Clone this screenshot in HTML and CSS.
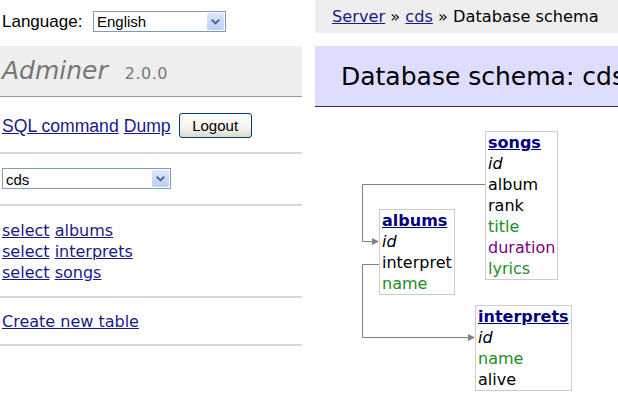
FILE: index.html
```html
<!DOCTYPE html>
<html lang="en">
<head>
  <meta charset="UTF-8">
  <title>Database schema: cds - Adminer</title>
  <link rel="stylesheet" href="styles.css">
</head>
<body>
  <div class="page">
    <div id="menu">
      <form class="lang">
        <label>Language:</label>
        <span class="select lang-select">
          <select><option>English</option></select>
          <svg class="arrow" width="18" height="17" viewBox="0 0 18 17"><path d="M5 6.5 L9 10.5 L13 6.5" fill="none" stroke="#4d6185" stroke-width="2"/></svg>
        </span>
      </form>

      <h1>Adminer <span class="version">2.0.0</span></h1>

      <div class="block links">
        <a href="#">SQL command</a> <a href="#">Dump</a>
        <button class="logout">Logout</button>
      </div>

      <div class="block db">
        <span class="select db-select">
          <select><option>cds</option></select>
          <svg class="arrow" width="18" height="17" viewBox="0 0 18 17"><path d="M5 6.5 L9 10.5 L13 6.5" fill="none" stroke="#4d6185" stroke-width="2"/></svg>
        </span>
      </div>

      <div class="block tables">
        <a href="#">select</a> <a href="#">albums</a><br>
        <a href="#">select</a> <a href="#">interprets</a><br>
        <a href="#">select</a> <a href="#">songs</a>
      </div>

      <div class="block create">
        <a href="#">Create new table</a>
      </div>
    </div>

    <div id="content">
      <p class="breadcrumb"><a href="#">Server</a> &raquo; <a href="#">cds</a> &raquo; Database schema</p>
      <h2>Database schema: cds</h2>

      <div class="schema">
        <svg class="refs" width="300" height="290">
          <path d="M170 77.5 H47.5 V134.5 H58" fill="none" stroke="#808080"/>
          <polygon points="57,131 64,134.5 57,138" fill="#808080"/>
          <path d="M64 157.5 H47.5 V230.5 H154" fill="none" stroke="#808080"/>
          <polygon points="153,227 160,230.5 153,234" fill="#808080"/>
        </svg>

        <div class="table" style="left: 170px; top: 24px;">
          <a href="#" class="name">songs</a>
          <span class="key">id</span>
          <span>album</span>
          <span>rank</span>
          <span class="text">title</span>
          <span class="time">duration</span>
          <span class="text">lyrics</span>
        </div>

        <div class="table" style="left: 64px; top: 102px;">
          <a href="#" class="name">albums</a>
          <span class="key">id</span>
          <span>interpret</span>
          <span class="text">name</span>
        </div>

        <div class="table" style="left: 160px; top: 198px;">
          <a href="#" class="name">interprets</a>
          <span class="key">id</span>
          <span class="text">name</span>
          <span>alive</span>
        </div>
      </div>
    </div>
  </div>
</body>
</html>
```

FILE: styles.css
```css
body {
  margin: 0;
  font-family: "DejaVu Sans", Verdana, sans-serif;
  font-size: 15px;
  color: #000;
  background: #fff;
  overflow: hidden;
}

a {
  color: #1a1a85;
}

.page {
  display: flex;
  gap: 13px;
}

/* left menu */
#menu {
  width: 302px;
  flex: none;
}

.lang {
  display: flex;
  align-items: center;
  gap: 8px;
  padding: 11px 0 0 2px;
  height: 21px;
  font-family: "Liberation Sans", Arial, sans-serif;
  font-size: 17px;
}

.lang label {
  width: 83px;
}

.select {
  position: relative;
  display: inline-block;
  height: 21px;
  box-sizing: border-box;
  border: 1px solid #7f9db9;
  background: #fff;
}

.select select {
  appearance: none;
  border: none;
  background: transparent;
  font-family: "Liberation Sans", Arial, sans-serif;
  font-size: 15px;
  height: 19px;
  width: 100%;
  padding: 0 0 0 3px;
  margin: 0;
  color: #000;
}

.select .arrow {
  position: absolute;
  right: 1px;
  top: 1px;
  width: 17px;
  height: 17px;
  background: linear-gradient(#dce6fc, #bccff7);
  border-radius: 2px;
}

.lang-select {
  width: 133px;
}

.db-select {
  width: 169px;
}

h1 {
  margin: 14px 0 0;
  height: 50px;
  line-height: 50px;
  background: #eee;
  border-bottom: 1px solid #999;
  padding-left: 2px;
  font-size: 25px;
  font-weight: normal;
  font-style: italic;
  color: #777;
}

.version {
  font-size: 16px;
  font-style: normal;
  margin-left: 9px;
  letter-spacing: 0.5px;
}

.block {
  border-bottom: 2px solid #d8d8d8;
  padding-left: 2px;
  font-size: 16px;
  line-height: 21px;
}

.links {
  padding-top: 16px;
  padding-bottom: 14px;
  height: 25px;
  display: flex;
  align-items: center;
  font-family: "Liberation Sans", Arial, sans-serif;
  font-size: 17.6px;
}

.links a {
  position: relative;
  top: 1px;
}

.links a + a {
  margin-left: 5px;
}

.logout {
  margin-left: 8px;
  width: 73px;
  height: 25px;
  border: 1px solid #003c74;
  border-radius: 3px;
  background: linear-gradient(#fff, #f4f3ee 60%, #dcd9cc);
  font-family: "Liberation Sans", Arial, sans-serif;
  font-size: 15px;
  color: #000;
  padding: 0;
}

.db {
  padding-top: 14px;
  padding-bottom: 15px;
  height: 21px;
}

.tables {
  padding-top: 14px;
  padding-bottom: 13px;
}

.create {
  padding-top: 13px;
  padding-bottom: 12px;
}

/* content */
#content {
  flex: 1;
  min-width: 0;
}

.breadcrumb {
  margin: 0;
  height: 33px;
  line-height: 33px;
  background: #eee;
  padding-left: 17px;
  font-size: 16.2px;
  white-space: nowrap;
}

h2 {
  margin: 13px 0 0;
  height: 60px;
  line-height: 61px;
  background: #ddf;
  border-bottom: 1px solid #333;
  padding-left: 26px;
  font-size: 25px;
  font-weight: normal;
  white-space: nowrap;
  overflow: hidden;
}

.schema {
  position: relative;
  height: 290px;
}

.refs {
  position: absolute;
  left: 0;
  top: 0;
}

.table {
  position: absolute;
  display: flex;
  flex-direction: column;
  border: 1px solid #ccc;
  padding: 0 2px 0 2px;
  background: #fff;
  font-size: 16px;
  line-height: 21px;
  white-space: nowrap;
}

.table .name {
  font-weight: bold;
  color: #000080;
}

.key {
  font-style: italic;
}

.text {
  color: #1e8c1e;
}

.time {
  color: #800080;
}
```
